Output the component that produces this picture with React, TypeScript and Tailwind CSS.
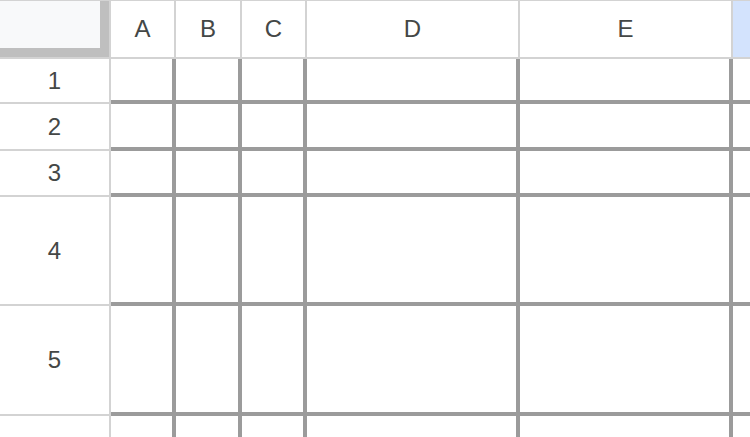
const COLS = ['A', 'B', 'C', 'D', 'E']
const ROWS = ['1', '2', '3', '4', '5', '']

export default function App() {
  return (
    <div
      className="grid h-[437px] w-[750px] overflow-hidden bg-white text-[#444746] grid-cols-[111px_65px_66px_65px_213px_213px_1fr] grid-rows-[59px_45px_47px_46px_109px_110px_1fr]"
      style={{ fontFamily: '"Liberation Sans", Arial, sans-serif' }}
    >
      {/* Corner */}
      <div className="border-t border-r-2 border-b-2 border-[#d3d3d3] bg-white">
        <div className="h-full w-full border-r-[9px] border-b-[9px] border-[#bfbfbf] bg-[#f8f9fa]" />
      </div>

      {/* Column headers */}
      {COLS.map((c) => (
        <div
          key={c}
          className="flex items-center justify-center border-t border-r-2 border-b-2 border-[#d3d3d3] text-[24px] leading-none"
        >
          {c}
        </div>
      ))}
      <div className="border-t border-b-2 border-[#d3d3d3] bg-[#d3e3fd]" />

      {/* Body rows */}
      {ROWS.map((r, i) => {
        const last = i === ROWS.length - 1
        return (
          <div key={i} className="contents">
            <div
              className={`flex items-center justify-center border-r-2 border-[#d3d3d3] text-[24px] leading-none ${
                last ? '' : 'border-b-2'
              }`}
            >
              {r}
            </div>
            {COLS.map((c) => (
              <div
                key={c}
                className={`border-r-4 border-[#9b9b9b] ${last ? '' : 'border-b-4'}`}
              />
            ))}
            <div className={`border-[#9b9b9b] ${last ? '' : 'border-b-4'}`} />
          </div>
        )
      })}
    </div>
  )
}
